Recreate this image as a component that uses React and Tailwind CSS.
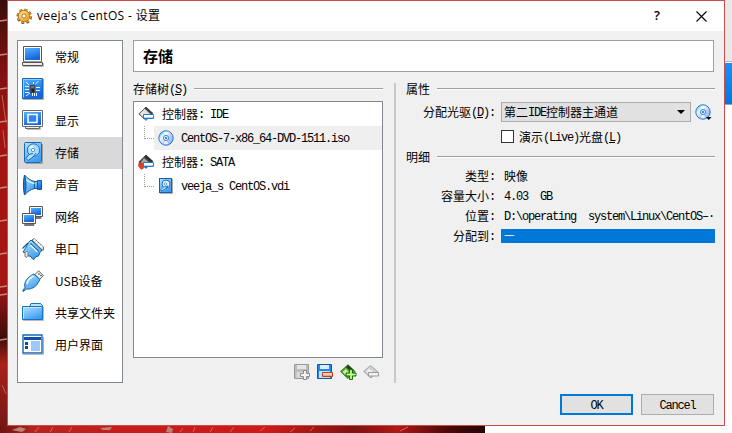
import { Fragment } from "react";

const SIDE_ITEMS = [
  { label: "常规", icon: GeneralIcon },
  { label: "系统", icon: SystemIcon },
  { label: "显示", icon: DisplayIcon },
  { label: "存储", icon: StorageIcon, active: true },
  { label: "声音", icon: AudioIcon },
  { label: "网络", icon: NetworkIcon },
  { label: "串口", icon: SerialIcon },
  { label: "USB设备", icon: UsbIcon },
  { label: "共享文件夹", icon: FolderIcon },
  { label: "用户界面", icon: InterfaceIcon },
];

const DETAILS = [
  { label: "类型:", value: "映像" },
  { label: "容量大小:", value: "4.03  GB" },
  { label: "位置:", value: "D:\\operating  system\\Linux\\CentOS–·" },
];

// Latin runs sit on a 6px grid, half the width of a CJK character
function Mono({ children }) {
  const runs = children.match(/[\x00-\xff\u2013]+|[^\x00-\xff\u2013]+/g) || [];
  return (
    <span className="whitespace-pre font-['Noto_Sans_CJK_SC',sans-serif] text-[12px] leading-4">
      {runs.map((run, i) =>
        run.charCodeAt(0) < 256 ? (
          <span key={i} className="align-[1px] font-['Liberation_Mono',monospace] text-[12px] leading-none tracking-[-1.2px]">
            {run}
          </span>
        ) : (
          <Fragment key={i}>{run}</Fragment>
        )
      )}
    </span>
  );
}

function Accel({ text, letter, end = "" }) {
  return (
    <span className="flex whitespace-pre">
      <Mono>{text + "("}</Mono>
      <span className="flex h-[14px] border-b border-black">
        <Mono>{letter}</Mono>
      </span>
      <Mono>{")" + end}</Mono>
    </span>
  );
}

function Rule() {
  return <div className="h-[2px] flex-1 border-t border-[#a0a0a0] bg-white" />;
}

function Gradients() {
  return (
    <svg width="0" height="0" className="absolute">
      <defs>
        <linearGradient id="blue" x1="0" y1="0" x2="0.4" y2="1">
          <stop offset="0" stopColor="#4fb4ff" />
          <stop offset="1" stopColor="#1565e0" />
        </linearGradient>
        <linearGradient id="sky" x1="0" y1="0" x2="0.6" y2="1">
          <stop offset="0" stopColor="#b5e4ff" />
          <stop offset="1" stopColor="#3d9cf0" />
        </linearGradient>
        <linearGradient id="gold" x1="0" y1="0" x2="1" y2="1">
          <stop offset="0" stopColor="#ffe38a" />
          <stop offset="1" stopColor="#e69a1c" />
        </linearGradient>
        <linearGradient id="disc" x1="0" y1="0" x2="1" y2="1">
          <stop offset="0" stopColor="#4aa9f0" />
          <stop offset="0.35" stopColor="#eafaff" />
          <stop offset="0.6" stopColor="#c9c2fa" />
          <stop offset="1" stopColor="#5fb8f5" />
        </linearGradient>
      </defs>
    </svg>
  );
}

function GeneralIcon() {
  return (
    <svg width="22" height="22" viewBox="0 0 22 22">
      <path d="M1.500.5h18v15h-18z" fill="#fff" stroke="#555" />
      <path d="M3 2h15v12H3z" fill="url(#blue)" />
      <path d="M2 15.500h17l1.500 2H.5z" fill="#d8d8d8" stroke="#999" strokeWidth=".6" />
      <path d="M.5 16.500h20v3H.5z" fill="#ececec" stroke="#555" />
      <path d="M1 20.500h20.500V17" fill="none" stroke="#bbb" />
    </svg>
  );
}

function SystemIcon() {
  return (
    <svg width="22" height="22" viewBox="0 0 22 22">
      <path d="M.5.5h20v20H.5z" fill="url(#blue)" stroke="#1567b8" />
      <path d="M1.500 19.500v-18h18" fill="none" stroke="#8ed2ff" />
      <path d="M11.500 4v2M13.500 6l3-3M3 8.500h4M3 11.500h4M3 14.500h4M14 9.500h4M14 12.500h4M4 18l4-3M10.500 15v3M12.500 15v3M14.500 15v3M4 4l3 3" stroke="#e3f7ff" />
      <path d="M8 7h5v8H8z" fill="#3d4650" />
      <path d="M9 8h3v2H9z" fill="#78736f" />
      <path d="M10 11h2v3h-2z" fill="#222" />
      <path d="M1 21.500h20.500V1" fill="none" stroke="#aaa" />
    </svg>
  );
}

function DisplayIcon() {
  return (
    <svg width="22" height="22" viewBox="0 0 22 22">
      <path d="M.5.5h20v16H.5z" fill="#fff" stroke="#666" />
      <path d="M2 2h17v13H2z" fill="url(#blue)" />
      <path d="M6 4.500h9v8H6z" fill="#2d83f0" stroke="#fff" strokeWidth="1.500" />
      <path d="M3.500 16.500h14v2h-14z" fill="#eee" stroke="#666" />
      <path d="M5 19.500h13.500V17" fill="none" stroke="#bbb" />
    </svg>
  );
}

function StorageIcon() {
  return (
    <svg width="22" height="22" viewBox="0 0 22 22">
      <rect x="2.500" y=".5" width="17" height="20" rx="1" fill="url(#sky)" stroke="#1669b4" />
      <circle cx="11.500" cy="8" r="6.200" fill="#a6dcff" stroke="#1c73c0" />
      <path d="M7 6a6 6 0 0 1 4-3l.5 4z" fill="#e9f8ff" />
      <circle cx="11" cy="8" r="1.700" fill="#fff" stroke="#2a7fca" strokeWidth=".7" />
      <path d="M14 11l-3 4-5 3.500-2-2 3-4 4-1" fill="#b9e4ff" stroke="#1768b0" />
      <path d="M4 21.500h16.500V2" fill="none" stroke="#888" strokeWidth=".7" />
    </svg>
  );
}

// Same drive, squarer and with a heavier outline for the tree
function SmallDriveIcon() {
  return (
    <svg width="16" height="16" viewBox="0 0 16 16">
      <rect x="1.500" y=".5" width="12" height="14" fill="url(#sky)" stroke="#0f5fb8" />
      <circle cx="8" cy="6" r="4" fill="#dff3ff" stroke="#1a6fc4" />
      <circle cx="7.500" cy="6" r="1.200" fill="#fff" stroke="#2a7fca" strokeWidth=".7" />
      <path d="M10 8l-3 3-3.500 2L3 11.500 5.500 9z" fill="#c6e8ff" stroke="#1768b0" strokeWidth=".8" />
      <path d="M2 15.500h12.500V1" fill="none" stroke="#999" strokeWidth=".8" />
    </svg>
  );
}

function AudioIcon() {
  return (
    <svg width="22" height="22" viewBox="0 0 22 22">
      <path d="M12 7.500h3.500v7H12z" fill="url(#sky)" stroke="#155a9c" />
      <path d="M15.500 6.500h4v9h-4z" fill="url(#blue)" stroke="#155a9c" />
      <path d="M2.500 1c3 3.500 6 5.500 10 6.500v7c-4 1-7 3-10 6.500z" fill="url(#sky)" stroke="#155a9c" />
      <path d="M2.500 1c2 6 2 14 0 20C1 16 1 6 2.500 1z" fill="#1c7ad6" stroke="#14579a" />
      <path d="M4.500 6c3 2 5 3 8 3.500" stroke="#e5f7ff" fill="none" strokeWidth="1.500" />
    </svg>
  );
}

function NetworkIcon() {
  return (
    <svg width="22" height="22" viewBox="0 0 22 22">
      <path d="M7.500.5h13v10h-13z" fill="#fff" stroke="#555" />
      <path d="M9 2h10v7H9z" fill="url(#blue)" />
      <path d="M10 11.500h9v1h-9z" fill="#ddd" stroke="#777" />
      <path d="M.5 7.500h13v10H.5z" fill="#fff" stroke="#555" />
      <path d="M2 9h10v7H2z" fill="url(#blue)" />
      <path d="M2.500 18.500h9.500v1H2.500z" fill="#ddd" stroke="#777" />
    </svg>
  );
}

function SerialIcon() {
  return (
    <svg width="22" height="22" viewBox="0 0 22 22">
      <path d="M10 2l2-1.500L21.500 9v3l-2 .5z" fill="#ddd" stroke="#666" />
      <path d="M6.500 4.500L9 2l11 10-2 2.500-1.500 3.500-3 1-1.500 2.500-2-1-1-2-4-1-1-2.500-3-1 2-3z" fill="url(#sky)" stroke="#12629e" />
      <path d="M.5 10.500L6 5M8.500 5.500l8 8" stroke="#145a91" strokeWidth="1.200" />
      <path d="M8.500 7l7 7" stroke="#e4f6ff" strokeWidth="1.500" />
      <path d="M3 18.500v-4l1.500-1.500L6 14.500v3l-1.500 2z" fill="#e5e5e5" stroke="#777" />
      <path d="M12 1.500l8 7.500" stroke="#fff" strokeWidth="1.500" strokeDasharray="2 1" />
    </svg>
  );
}

function UsbIcon() {
  return (
    <svg width="22" height="22" viewBox="0 0 22 22">
      <path d="M13 4.500L16.500.8l5 4.700-4 4z" fill="#f2f2f2" stroke="#666" />
      <path d="M16.500 3.500l1 1M18.500 5l1 1" stroke="#444" strokeWidth="1.400" />
      <path d="M12 4l6 5.500-3 5c-3 4-8 5-10.500 4.500L1 21.500.5 21 3 17.500C1.500 13 5 7 12 4z" fill="url(#sky)" stroke="#14609d" />
      <path d="M5 14c0-4 3-6 6.500-8" stroke="#e8f8ff" strokeWidth="1.600" fill="none" />
    </svg>
  );
}

function FolderIcon() {
  return (
    <svg width="22" height="22" viewBox="0 0 22 22">
      <path d="M7.500 4.500L9 1.500h9.500l2 2V6" fill="#b5e4ff" stroke="#176fba" />
      <path d="M.5 4.500h20v13H.5z" fill="url(#sky)" stroke="#1673bd" />
      <path d="M1.500 16.500v-11h18" fill="none" stroke="#bfe8ff" />
      <path d="M1 18.500h20.500V5" fill="none" stroke="#aaa" strokeWidth=".8" />
    </svg>
  );
}

function InterfaceIcon() {
  return (
    <svg width="22" height="22" viewBox="0 0 22 22">
      <path d="M1 1h19v18H1z" fill="#fff" stroke="#1766b8" strokeWidth="1.400" />
      <path d="M2 3h17v3H2z" fill="#0d4fae" />
      <path d="M3 8h3v3H3zM3 12h3v3H3z" fill="#0f4a96" />
      <path d="M9 7h9v10H9z" fill="#9cc7ff" />
      <path d="M1 20.300h20.500V3" fill="none" stroke="#aaa" />
    </svg>
  );
}

function GearIcon() {
  return (
    <svg width="16" height="16" viewBox="0 0 16 16">
      <circle cx="8.300" cy="8.500" r="6.700" fill="none" stroke="#6d4a1b" strokeWidth="2" strokeDasharray="2.800 2.460" />
      <circle cx="8" cy="8" r="6.400" fill="none" stroke="#d9922a" strokeWidth="2" strokeDasharray="2.600 2.426" />
      <circle cx="8" cy="8" r="5.700" fill="url(#gold)" stroke="#a2681a" strokeWidth=".8" />
      <circle cx="8" cy="8" r="2" fill="#fff" stroke="#a06a20" strokeWidth=".8" />
    </svg>
  );
}

function DiscIcon({ menu }) {
  return (
    <svg width="17" height="17" viewBox="0 0 17 17">
      <circle cx="8" cy="8" r="7.200" fill="url(#disc)" stroke="#2377cf" />
      <path d="M8 8L6 2a6 6 0 0 1 4 0zM8 8l2 6a6 6 0 0 1-4 0z" fill="#fff" opacity=".75" />
      <circle cx="8" cy="8" r="2.600" fill="#d8f3ff" stroke="#3b8edb" />
      <circle cx="8" cy="8" r="1" fill="#1567b5" />
      {menu && <path d="M11 13h5.500l-2.700 3z" fill="#000" />}
    </svg>
  );
}

function ControllerIcon({ sata }) {
  return (
    <svg width="17" height="17" viewBox="0 0 17 17">
      <path d="M.8 8L8 1l7 6.500-7 6.800z" fill={sata ? "#444" : "#d6d6d6"} stroke="#555" />
      <path d="M8 1l7 6.500-2 1L6.500 2.500z" fill={sata ? "#303030" : "#3c3c3c"} />
      <path d="M2.500 8.500L6 4l4.500 4-3 4z" fill={sata ? "#a5a5a5" : "#e6e6e6"} />
      {sata && <path d="M.7 9.500l2.500-1 3 3-1 3-2 .8-2.500-3z" fill="#e2401f" stroke="#a82a14" strokeWidth=".6" />}
      <path d="M5.500 8.500h10v4h-10z" fill="#fff" stroke="#1d7fd8" />
      <path d="M6 11h9v1H6z" fill="#a8d6fa" />
    </svg>
  );
}

function AddDiskIcon() {
  return (
    <svg width="17" height="17" viewBox="0 0 17 17">
      <path d="M.5.5h14v14H.5z" fill="#bcbcbc" stroke="#999" />
      <path d="M3 1h9v4H3z" fill="#e6e6e6" />
      <path d="M2.500 8h8v6h-8z" fill="#d9d9d9" />
      <path d="M9.500 6.500h3v3h3v3h-3v3h-3v-3h-3v-3h3z" fill="#f2f2f2" stroke="#8d8d8d" />
    </svg>
  );
}

function RemoveDiskIcon() {
  return (
    <svg width="17" height="17" viewBox="0 0 17 17">
      <path d="M.5.5h14v14H.5z" fill="#2287e8" stroke="#0e59a8" />
      <path d="M3 1h9v4H3z" fill="#d9efff" />
      <path d="M2 7h11v7H2z" fill="#bce2ff" />
      <path d="M5.500 8.500h10v4h-10z" fill="#fbe0d4" stroke="#c63b1a" />
      <path d="M6 10.500h9V12H6z" fill="#f0a58c" />
    </svg>
  );
}

function AddControllerIcon() {
  return (
    <svg width="17" height="17" viewBox="0 0 17 17">
      <path d="M.7 7.500L8 .8l7 6.700-7 7z" fill="#5bb030" stroke="#245d10" />
      <path d="M8 1l6 5.500-3 2-5-5.500z" fill="#263c1c" />
      <path d="M2.500 8L6 5l3 3.500-3 3z" fill="#c5efa2" />
      <path d="M9.500 5.500h3v3.500h3.500v3h-3.500v3.500h-3V12H6V9h3.500z" fill="#8ee34e" stroke="#1f6d0d" />
      <path d="M11 6.500V15M7 10.500h8.500" stroke="#d5fbb4" />
    </svg>
  );
}

function RemoveControllerIcon() {
  return (
    <svg width="17" height="17" viewBox="0 0 17 17">
      <path d="M.7 7.500L7.500 1.500l7 6-6.500 6.500z" fill="#d0d0d0" stroke="#a0a0a0" />
      <path d="M3 7.500l3-3 5 4-3 3z" fill="#eee" />
      <path d="M5.500 8.500h10v3.500h-10z" fill="#f4f4f4" stroke="#999" />
    </svg>
  );
}

function Wallpaper() {
  const bricks = [20, 54, 88, 121, 155, 187, 220, 253, 286, 294, 339];
  return (
    <svg width="732" height="433" className="absolute inset-0">
      <defs>
        <linearGradient id="wallLeft" x1="0" y1="0" x2="0" y2="1">
          <stop offset="0" stopColor="#390d0c" />
          <stop offset="0.15" stopColor="#7b1110" />
          <stop offset="0.3" stopColor="#a11511" />
          <stop offset="0.65" stopColor="#a71612" />
          <stop offset="0.78" stopColor="#3d0d0b" />
          <stop offset="0.84" stopColor="#a92019" />
          <stop offset="1" stopColor="#6f1812" />
        </linearGradient>
        <linearGradient id="wallBottom">
          <stop offset="0" stopColor="#6c1511" />
          <stop offset="0.07" stopColor="#b5241e" />
          <stop offset="0.25" stopColor="#c61c1b" />
          <stop offset="0.55" stopColor="#cd1b19" />
          <stop offset="0.73" stopColor="#7e1210" />
          <stop offset="0.82" stopColor="#b01715" />
          <stop offset="0.92" stopColor="#4c0907" />
          <stop offset="1" stopColor="#250403" />
        </linearGradient>
      </defs>
      <rect width="8" height="433" fill="url(#wallLeft)" />
      <rect y="425" width="485" height="8" fill="url(#wallBottom)" />
      {bricks.map((y) => (
        <path key={y} d={`M0 ${y + 1}l7-1`} stroke="#c9867a" strokeWidth="1.500" />
      ))}
      <path d="M2 95l4 28M3 130l2 18M2 385l4 9" stroke="#b06b55" fill="none" />
      <path d="M12 430l8-3 6 2-4 3zM100 428l12-1-2 3h-7zM166 432l2-6 5 3-1 4z" fill="#b98576" />
      <path d="M35 432l4-5M50 432l3-5M69 432l3-5M180 432l3-4M193 432l2-5M210 432l3-5M230 432l4-5M260 431l5-4M290 432l5-4M310 431l4-4M400 431l8-4" stroke="#dc6258" />
    </svg>
  );
}

function TreeBranch() {
  return (
    <span className="flex w-5 shrink-0 justify-end self-stretch">
      <span className="h-[13px] w-[10px] border-b border-l border-dotted border-[#9a9a9a]" />
    </span>
  );
}

function TitleBar() {
  return (
    <div className="flex h-[30px] shrink-0 items-center bg-white pl-2">
      <GearIcon />
      <span className="ml-[5px] whitespace-pre font-['Open_Sans','Noto_Sans_CJK_SC',sans-serif] text-[12px] tracking-[0.36px]">
        veeja's CentOS - 设置
      </span>
      <span className="ml-auto mr-[36px] font-['Open_Sans',sans-serif] text-[13px] font-semibold">?</span>
      <svg width="11" height="11" viewBox="0 0 11 11" className="mr-[17px]">
        <path d="M.5.5l10 10M10.500.5l-10 10" stroke="#000" strokeWidth="1.100" />
      </svg>
    </div>
  );
}

function Sidebar() {
  return (
    <ul className="h-[343px] w-[106px] shrink-0 border border-[#828790] bg-white">
      {SIDE_ITEMS.map(({ label, icon: Icon, active }) => (
        <li key={label} className={`flex h-8 items-center pl-1 ${active ? "bg-[#d9d9d9]" : ""}`}>
          <Icon />
          <span className="ml-[11px] whitespace-nowrap font-['Noto_Sans_CJK_SC',sans-serif] text-[12px]">{label}</span>
        </li>
      ))}
    </ul>
  );
}

function StorageTree() {
  return (
    <section className="w-[250px] shrink-0">
      <div className="flex h-4 items-center gap-[7px]">
        <Accel text="存储树" letter="S" />
        <Rule />
      </div>
      <div className="mt-1 h-[257px] border border-[#828790] bg-white">
        <div className="flex h-6 items-center gap-[7px] pl-1">
          <ControllerIcon />
          <Mono>控制器: IDE</Mono>
        </div>
        <div className="flex h-6 items-center">
          <TreeBranch />
          <div className="flex h-6 flex-1 items-center gap-[6px] bg-[#efefef] pl-1">
            <DiscIcon />
            <Mono>CentOS-7-x86_64-DVD-1511.iso</Mono>
          </div>
        </div>
        <div className="flex h-6 items-center gap-[7px] pl-1">
          <ControllerIcon sata />
          <Mono>控制器: SATA</Mono>
        </div>
        <div className="flex h-6 items-center">
          <TreeBranch />
          <div className="flex items-center gap-[7px] pl-1">
            <SmallDriveIcon />
            <Mono>veeja_s CentOS.vdi</Mono>
          </div>
        </div>
      </div>
      <div className="mt-[6px] flex justify-end gap-[6px] pr-[3px]">
        <AddDiskIcon />
        <RemoveDiskIcon />
        <AddControllerIcon />
        <RemoveControllerIcon />
      </div>
    </section>
  );
}

function Attributes() {
  return (
    <section className="ml-[10px] min-w-0 flex-1">
      <div className="flex h-4 items-center gap-[7px]">
        <Mono>属性</Mono>
        <Rule />
      </div>
      <div className="mt-[5px] flex h-5 items-center">
        <div className="flex w-[95px] justify-end pr-[6px]">
          <Accel text="分配光驱" letter="D" end=":" />
        </div>
        <div className="flex h-5 w-[190px] items-center justify-between border border-[#adadad] bg-[#e1e1e1] pl-[2px] pr-[5px]">
          <Mono>第二IDE控制器主通道</Mono>
          <svg width="8" height="4" viewBox="0 0 8 4">
            <path d="M0 0h8L4 4z" />
          </svg>
        </div>
        <div className="ml-[4px]">
          <DiscIcon menu />
        </div>
      </div>
      <div className="ml-[95px] mt-[7px] flex h-[15px] items-center gap-[5px]">
        <span className="h-[13px] w-[13px] border border-[#333] bg-white" />
        <Accel text="演示(Live)光盘" letter="L" />
      </div>
      <div className="mt-[5px] flex h-4 items-center gap-[7px]">
        <Mono>明细</Mono>
        <Rule />
      </div>
      <dl className="mt-[1px]">
        {DETAILS.map(({ label, value }) => (
          <div key={label} className="flex h-5 items-center">
            <dt className="flex w-[95px] shrink-0 justify-end pr-[6px]">
              <Mono>{label}</Mono>
            </dt>
            <dd className="flex pl-[3px]">
              <Mono>{value}</Mono>
            </dd>
          </div>
        ))}
        <div className="flex h-5 items-center">
          <dt className="flex w-[95px] shrink-0 justify-end pr-[6px]">
            <Mono>分配到:</Mono>
          </dt>
          <dd className="flex h-[14px] flex-1 items-center bg-[#0078d7] pb-[5px] pl-[3px] text-white">
            <Mono>—</Mono>
          </dd>
        </div>
      </dl>
    </section>
  );
}

export default function App() {
  return (
    <div className="relative h-[433px] w-[732px] overflow-hidden bg-white text-black">
      <Gradients />
      <Wallpaper />
      <div className="absolute right-0 top-0 flex h-[106px] w-2 flex-col">
        <div className="h-[61px] bg-[#e9e9e9]" />
        <div className="h-[2px] border-t border-[#b5b5b5]" />
        <div className="h-[42px] border-b border-[#7fa8cc] bg-linear-to-b from-[#1790f5] to-[#0078dc]" />
      </div>

      <div className="absolute left-[7px] top-0 flex h-[426px] w-[718px] flex-col border border-[#cb4c48] bg-[#f0f0f0]">
        <TitleBar />
        <div className="flex gap-[10px] pl-[9px] pr-[9px] pt-[9px]">
          <Sidebar />
          <div className="min-w-0 flex-1">
            <h1 className="mr-px flex h-8 items-center border border-[#a0a0a0] bg-white pl-[9px] font-['Noto_Sans_CJK_SC',sans-serif] text-[15px] font-bold">
              存储
            </h1>
            <div className="flex pt-[9px]">
              <StorageTree />
              <div className="ml-[11px] mt-[2px] h-[300px] w-[2px] bg-[#c8c8c8]" />
              <Attributes />
            </div>
          </div>
        </div>
        <div className="mt-auto flex justify-end gap-2 pb-[10px] pr-[10px]">
          <button className="flex h-[21px] w-[73px] items-center justify-center border-2 border-[#0078d7] bg-[#e1e1e1]">
            <Mono>OK</Mono>
          </button>
          <button className="flex h-[21px] w-[73px] items-center justify-center border border-[#adadad] bg-[#e1e1e1]">
            <Mono>Cancel</Mono>
          </button>
        </div>
      </div>
    </div>
  );
}
